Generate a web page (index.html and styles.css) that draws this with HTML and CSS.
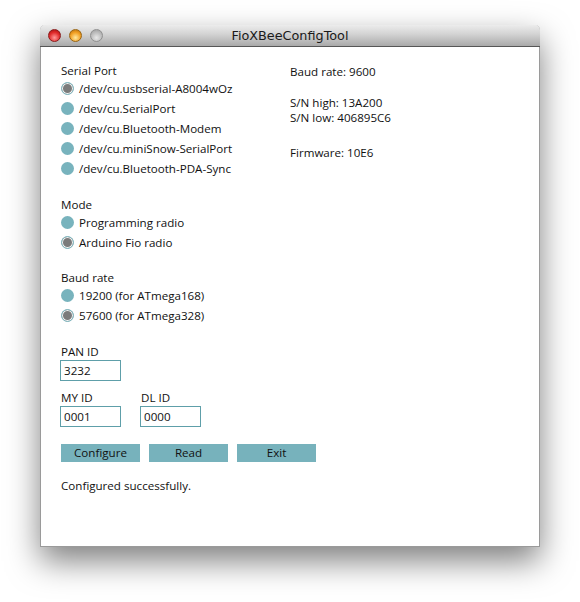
FILE: index.html
```html
<!DOCTYPE html>
<html lang="en">
  <head>
    <meta charset="UTF-8" />
    <title>FioXBeeConfigTool</title>
    <link rel="stylesheet" href="styles.css">
  </head>
  <body>
    <div class="window">
      <div class="titlebar">
        <div class="lights">
          <span class="light close"></span>
          <span class="light min"></span>
          <span class="light zoom"></span>
        </div>
        <div class="title">FioXBeeConfigTool</div>
      </div>

      <div class="content">
        <div class="left">
          <div class="group">
            <div class="label">Serial Port</div>
            <div class="option"><span class="radio on"></span>/dev/cu.usbserial-A8004wOz</div>
            <div class="option"><span class="radio"></span>/dev/cu.SerialPort</div>
            <div class="option"><span class="radio"></span>/dev/cu.Bluetooth-Modem</div>
            <div class="option"><span class="radio"></span>/dev/cu.miniSnow-SerialPort</div>
            <div class="option"><span class="radio"></span>/dev/cu.Bluetooth-PDA-Sync</div>
          </div>

          <div class="group">
            <div class="label">Mode</div>
            <div class="option"><span class="radio"></span>Programming radio</div>
            <div class="option"><span class="radio on"></span>Arduino Fio radio</div>
          </div>

          <div class="group">
            <div class="label">Baud rate</div>
            <div class="option"><span class="radio"></span>19200 (for ATmega168)</div>
            <div class="option"><span class="radio on"></span>57600 (for ATmega328)</div>
          </div>

          <div class="field pan">
            <div class="label">PAN ID</div>
            <div class="box">3232</div>
          </div>

          <div class="ids">
            <div class="field">
              <div class="label">MY ID</div>
              <div class="box">0001</div>
            </div>
            <div class="field">
              <div class="label">DL ID</div>
              <div class="box">0000</div>
            </div>
          </div>

          <div class="buttons">
            <div class="button">Configure</div>
            <div class="button">Read</div>
            <div class="button">Exit</div>
          </div>

          <div class="status">Configured successfully.</div>
        </div>

        <div class="right">
          <div class="info">Baud rate: 9600</div>
          <div class="info sn">S/N high: 13A200</div>
          <div class="info">S/N low: 406895C6</div>
          <div class="info fw">Firmware: 10E6</div>
        </div>
      </div>
    </div>
  </body>
</html>
```

FILE: styles.css
```css
html,
body {
  background: #fff;
}

body {
  margin: 0;
  min-height: 602px;
  font-family: "Open Sans", "Liberation Sans", Arial, sans-serif;
  font-size: 11.6px;
  color: #111;
}

.window {
  box-sizing: border-box;
  width: 500px;
  height: 522px;
  margin: 25px 0 0 40px;
  background: #fff;
  border: 1px solid #9a9a9a;
  border-top: none;
  border-radius: 5px 5px 0 0;
  box-shadow: 0 14px 32px rgba(0, 0, 0, 0.5);
}

.titlebar {
  position: relative;
  height: 21px;
  margin: 0 -1px;
  border-bottom: 1px solid #565656;
  border-radius: 5px 5px 0 0;
  background: linear-gradient(#ececec, #d2d2d2 45%, #a9a9a9);
}

.lights {
  position: absolute;
  left: 8px;
  top: 4px;
  display: flex;
  gap: 8px;
}

.light {
  width: 13px;
  height: 13px;
  border-radius: 50%;
  box-sizing: border-box;
}

.light.close {
  background: radial-gradient(circle at 50% 70%, #ff9a9a, #e12b2b 55%, #9c0c0c);
  border: 1px solid #8a1a1a;
}

.light.min {
  background: radial-gradient(circle at 50% 70%, #ffe9a0, #f2a024 55%, #b16a0a);
  border: 1px solid #9a6512;
}

.light.zoom {
  background: radial-gradient(circle at 50% 70%, #e8e8e8, #bdbdbd 55%, #9a9a9a);
  border: 1px solid #909090;
}

.title {
  text-align: center;
  font-family: "DejaVu Sans", sans-serif;
  font-size: 12.8px;
  line-height: 22px;
  color: #1a1a1a;
}

.content {
  display: flex;
  padding: 16px 20px 0 20px;
}

.left {
  width: 229px;
  flex-shrink: 0;
}

.label {
  line-height: 16px;
}

.group .label {
  margin-bottom: -1px;
}

.group + .group {
  margin-top: 19px;
}

.group + .group + .group {
  margin-top: 18px;
}

.option {
  display: flex;
  align-items: center;
  height: 20px;
}

.radio {
  box-sizing: border-box;
  width: 13px;
  height: 13px;
  margin-right: 5px;
  border-radius: 50%;
  background: #78b3bd;
}

.radio.on {
  background: #7b7b7b;
  border: 1px solid #7fb7c0;
  box-shadow: inset 0 0 0 1px #f2f2f2;
}

.field.pan {
  margin-top: 19px;
}

.box {
  box-sizing: border-box;
  width: 61px;
  height: 21px;
  margin-left: -1px;
  padding: 0 3px;
  border: 1px solid #5e9fa9;
  line-height: 19px;
}

.ids {
  display: flex;
  gap: 20px;
  margin-top: 9px;
}

.buttons {
  display: flex;
  gap: 9px;
  margin-top: 17px;
}

.button {
  flex-shrink: 0;
  width: 79px;
  height: 18px;
  line-height: 18px;
  text-align: center;
  background: #77b2bc;
}

.status {
  margin-top: 16px;
  line-height: 16px;
}

.right .info {
  line-height: 15px;
  margin-top: 0.5px;
}

.right .sn {
  margin-top: 16px;
}

.right .fw {
  margin-top: 20px;
}
```
